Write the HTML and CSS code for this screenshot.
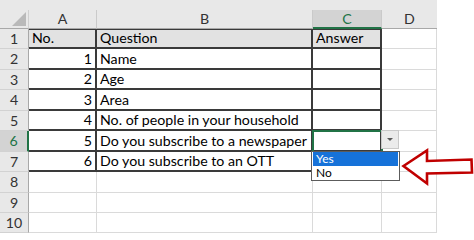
FILE: index.html
```html
<!DOCTYPE html>
<html>
<head>
<meta charset="utf-8">
<link rel="stylesheet" href="styles.css">
</head>
<body>
<div class="page">
  <div class="top-strip"></div>
  <div class="sheet">
    <div class="corner"><span class="tri"></span></div>
    <div class="ch">A</div>
    <div class="ch">B</div>
    <div class="ch ch-sel">C</div>
    <div class="ch ch-last">D</div>

    <div class="rh">1</div>
    <div class="c t t1 tl">No.</div>
    <div class="c t t1">Question</div>
    <div class="c t t1">Answer</div>
    <div class="c"></div>

    <div class="rh r21">2</div>
    <div class="c t num">1</div>
    <div class="c t">Name</div>
    <div class="c t"></div>
    <div class="c"></div>

    <div class="rh">3</div>
    <div class="c t num">2</div>
    <div class="c t">Age</div>
    <div class="c t"></div>
    <div class="c"></div>

    <div class="rh">4</div>
    <div class="c t num">3</div>
    <div class="c t">Area</div>
    <div class="c t"></div>
    <div class="c"></div>

    <div class="rh">5</div>
    <div class="c t num">4</div>
    <div class="c t">No. of people in your household</div>
    <div class="c t"></div>
    <div class="c"></div>

    <div class="rh rh-sel">6</div>
    <div class="c t num">5</div>
    <div class="c t">Do you subscribe to a newspaper</div>
    <div class="c t active">
      <div class="dd-btn"><span class="dd-tri"></span></div>
      <div class="dd-list">
        <div class="opt opt-sel">Yes</div>
        <div class="opt">No</div>
      </div>
    </div>
    <div class="c"></div>

    <div class="rh">7</div>
    <div class="c t num">6</div>
    <div class="c t">Do you subscribe to an OTT</div>
    <div class="c t"></div>
    <div class="c"></div>

    <div class="rh">8</div>
    <div class="c"></div>
    <div class="c"></div>
    <div class="c"></div>
    <div class="c"></div>

    <div class="rh">9</div>
    <div class="c"></div>
    <div class="c"></div>
    <div class="c"></div>
    <div class="c"></div>

    <div class="rh">10</div>
    <div class="c"></div>
    <div class="c"></div>
    <div class="c"></div>
    <div class="c"></div>
  </div>
  <svg class="arrow" width="74" height="43" viewBox="400 145 74 43" xmlns="http://www.w3.org/2000/svg">
    <path d="M403.5 166 L427 150.5 L427 161 L471.5 159.5 L472 172.5 L427 173.5 L427 183.5 Z" fill="#ffffff" stroke="#c00000" stroke-width="2.6" stroke-linejoin="miter"/>
  </svg>
</div>
</body>
</html>
```
FILE: styles.css
```css
html, body {
  margin: 0;
  padding: 0;
  background: #ffffff;
}
body {
  width: 474px;
  height: 233px;
  overflow: hidden;
  font-family: Lato, "Liberation Sans", sans-serif;
  font-size: 14.2px;
  color: #000;
}
.page {
  position: relative;
  width: 474px;
  height: 233px;
}
.top-strip {
  width: 437px;
  height: 10px;
  background: #e8e8e8;
}
.sheet {
  display: grid;
  width: 437px;
  grid-template-columns: 29px 68px 216px 69px 55px;
  grid-template-rows: 19px 20px 21px 20px 21px 20px 21px 20px 21px 20px 20px;
}
.corner {
  background: #e8e8e8;
  border-right: 1px solid #cfcfcf;
  border-bottom: 1px solid #a8a8a8;
  box-sizing: border-box;
  display: flex;
  align-items: flex-end;
  justify-content: flex-end;
  padding: 0 2px 2px 0;
}
.tri {
  width: 0;
  height: 0;
  border-left: 14px solid transparent;
  border-bottom: 14px solid #b9b9b9;
}
.ch {
  background: #e8e8e8;
  border-right: 1px solid #cacaca;
  border-bottom: 1px solid #a8a8a8;
  box-sizing: border-box;
  display: flex;
  align-items: center;
  justify-content: center;
  color: #333;
  line-height: 18px;
}
.ch-last {
  border-right: none;
}
.ch-sel {
  background: #d3d3d3;
  color: #217346;
  border-bottom: 2px solid #217346;
}
.rh {
  background: #e8e8e8;
  border-right: 1px solid #a8a8a8;
  border-bottom: 1px solid #d2d2d2;
  box-sizing: border-box;
  display: flex;
  align-items: center;
  justify-content: center;
  color: #333;
  line-height: 18px;
}
.rh-sel {
  background: #d3d3d3;
  color: #217346;
  border-right: 2px solid #217346;
}
.c {
  background: #fff;
  border-right: 1px solid #dadada;
  border-bottom: 1px solid #dadada;
  box-sizing: border-box;
  display: flex;
  align-items: flex-end;
  padding: 0 3px;
  line-height: 18px;
  white-space: nowrap;
}
.c.t {
  border-right: 2px solid #3a3a3a;
  border-bottom: 2px solid #3a3a3a;
}
.c.t1 {
  background: #e2e2e2;
  border-top: 1px solid #3a3a3a;
}
.num {
  justify-content: flex-end;
}
.active {
  position: relative;
  outline: 2px solid #217346;
  outline-offset: -1px;
  z-index: 2;
}
.dd-btn {
  position: absolute;
  left: calc(100% + 1px);
  top: -1px;
  width: 18px;
  height: 19px;
  box-sizing: border-box;
  background: #ebebeb;
  border: 1px solid #c9c9c9;
  display: flex;
  align-items: center;
  justify-content: center;
}
.dd-tri {
  width: 0;
  height: 0;
  border-left: 3px solid transparent;
  border-right: 3px solid transparent;
  border-top: 3px solid #5a5a5a;
}
.dd-list {
  position: absolute;
  left: -2px;
  top: calc(100% + 1px);
  width: 89px;
  height: 30px;
  box-sizing: border-box;
  background: #fff;
  border: 1px solid #5c5c5c;
  padding: 0 1px;
  z-index: 3;
}
.opt {
  height: 14px;
  line-height: 14px;
  padding-left: 3px;
  font-size: 12px;
  overflow: hidden;
}
.opt-sel {
  background: #1672d9;
  color: #ffffff;
}
.arrow {
  position: absolute;
  left: 400px;
  top: 145px;
  z-index: 4;
}
```
